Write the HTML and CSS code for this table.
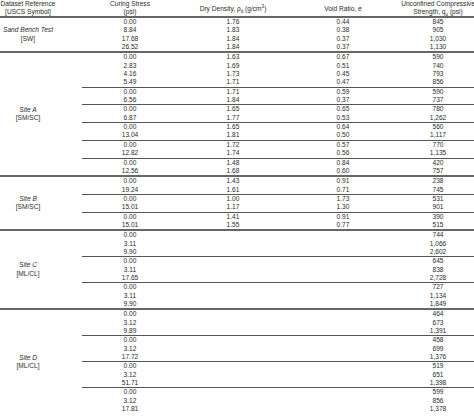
FILE: index.html
```html
<!DOCTYPE html>
<html>
<head>
<meta charset="utf-8">
<link rel="stylesheet" href="styles.css">
</head>
<body>
<table class="data">
<colgroup>
<col class="c1"><col class="c2"><col class="c3"><col class="c4"><col class="c5">
</colgroup>
<thead>
<tr>
<th class="label">Dataset Reference<br>[USCS Symbol]</th>
<th>Curing Stress<br>(psi)</th>
<th class="single">Dry Density, ρ<sub>d</sub> (g/cm<sup>3</sup>)</th>
<th class="single">Void Ratio, <i>e</i></th>
<th>Unconfined Compressive<br>Strength, q<sub>u</sub> (psi)</th>
</tr>
</thead>
<tbody>
<tr><td class="label" rowspan="4"><i>Sand Bench Test</i><br>[SW]</td><td>0.00</td><td>1.76</td><td>0.44</td><td>845</td></tr>
<tr><td>8.84</td><td>1.83</td><td>0.38</td><td>905</td></tr>
<tr><td>17.68</td><td>1.84</td><td>0.37</td><td>1,030</td></tr>
<tr><td>26.52</td><td>1.84</td><td>0.37</td><td>1,130</td></tr>
</tbody>
<tbody>
<tr><td class="label" rowspan="14"><i>Site A</i><br>[SM/SC]</td><td>0.00</td><td>1.63</td><td>0.67</td><td>590</td></tr>
<tr><td>2.83</td><td>1.69</td><td>0.51</td><td>740</td></tr>
<tr><td>4.16</td><td>1.73</td><td>0.45</td><td>793</td></tr>
<tr><td>5.49</td><td>1.71</td><td>0.47</td><td>856</td></tr>
<tr class="sub"><td>0.00</td><td>1.71</td><td>0.59</td><td>590</td></tr>
<tr><td>6.56</td><td>1.84</td><td>0.37</td><td>737</td></tr>
<tr class="sub"><td>0.00</td><td>1.65</td><td>0.65</td><td>780</td></tr>
<tr><td>6.87</td><td>1.77</td><td>0.53</td><td>1,262</td></tr>
<tr class="sub"><td>0.00</td><td>1.65</td><td>0.64</td><td>560</td></tr>
<tr><td>13.04</td><td>1.81</td><td>0.50</td><td>1,117</td></tr>
<tr class="sub"><td>0.00</td><td>1.72</td><td>0.57</td><td>770</td></tr>
<tr><td>12.82</td><td>1.74</td><td>0.56</td><td>1,135</td></tr>
<tr class="sub"><td>0.00</td><td>1.48</td><td>0.84</td><td>420</td></tr>
<tr><td>12.56</td><td>1.68</td><td>0.60</td><td>757</td></tr>
</tbody>
<tbody>
<tr><td class="label" rowspan="6"><i>Site B</i><br>[SM/SC]</td><td>0.00</td><td>1.43</td><td>0.91</td><td>238</td></tr>
<tr><td>19.24</td><td>1.61</td><td>0.71</td><td>745</td></tr>
<tr class="sub"><td>0.00</td><td>1.00</td><td>1.73</td><td>531</td></tr>
<tr><td>15.01</td><td>1.17</td><td>1.30</td><td>901</td></tr>
<tr class="sub"><td>0.00</td><td>1.41</td><td>0.91</td><td>390</td></tr>
<tr><td>15.01</td><td>1.55</td><td>0.77</td><td>515</td></tr>
</tbody>
<tbody>
<tr><td class="label" rowspan="9"><i>Site C</i><br>[ML/CL]</td><td>0.00</td><td></td><td></td><td>744</td></tr>
<tr><td>3.11</td><td></td><td></td><td>1,066</td></tr>
<tr><td>9.90</td><td></td><td></td><td>2,602</td></tr>
<tr class="sub"><td>0.00</td><td></td><td></td><td>645</td></tr>
<tr><td>3.11</td><td></td><td></td><td>838</td></tr>
<tr><td>17.65</td><td></td><td></td><td>2,728</td></tr>
<tr class="sub"><td>0.00</td><td></td><td></td><td>727</td></tr>
<tr><td>3.11</td><td></td><td></td><td>1,134</td></tr>
<tr><td>9.90</td><td></td><td></td><td>1,849</td></tr>
</tbody>
<tbody>
<tr><td class="label" rowspan="12"><i>Site D</i><br>[ML/CL]</td><td>0.00</td><td></td><td></td><td>464</td></tr>
<tr><td>3.12</td><td></td><td></td><td>673</td></tr>
<tr><td>9.89</td><td></td><td></td><td>1,391</td></tr>
<tr class="sub"><td>0.00</td><td></td><td></td><td>458</td></tr>
<tr><td>3.12</td><td></td><td></td><td>699</td></tr>
<tr><td>17.72</td><td></td><td></td><td>1,376</td></tr>
<tr class="sub"><td>0.00</td><td></td><td></td><td>519</td></tr>
<tr><td>3.12</td><td></td><td></td><td>651</td></tr>
<tr><td>51.71</td><td></td><td></td><td>1,398</td></tr>
<tr class="sub"><td>0.00</td><td></td><td></td><td>599</td></tr>
<tr><td>3.12</td><td></td><td></td><td>856</td></tr>
<tr><td>17.81</td><td></td><td></td><td>1,378</td></tr>
</tbody>
</table>
</body>
</html>
```

FILE: styles.css
```css
html, body {
  margin: 0;
  padding: 0;
  background: #ffffff;
  overflow: hidden;
}

.data {
  border-collapse: collapse;
  table-layout: fixed;
  width: 478px;
  font-family: "Liberation Sans", Arial, sans-serif;
  font-size: 6.6px;
  color: #2a2a2a;
}

.c1 { width: 82px; }
.c2 { width: 96px; }
.c3 { width: 110px; }
.c4 { width: 110px; }
.c5 { width: 80px; }

.data th,
.data td {
  padding: 0;
  text-align: center;
  white-space: nowrap;
  font-weight: normal;
}

.data td {
  height: 8.35px;
  line-height: 8.35px;
}

.data thead th {
  height: 16px;
  line-height: 8px;
  vertical-align: middle;
  border-bottom: 2px solid #666666;
}

.data thead th.single {
  padding-top: 2px;
  height: 14px;
}

.data .label {
  padding-right: 26px;
  vertical-align: middle;
}

.data tbody {
  border-top: 2px solid #666666;
}

.data tr.sub td {
  border-top: 1px solid #555555;
}

.data sub,
.data sup {
  font-size: 70%;
  line-height: 0;
}
```
